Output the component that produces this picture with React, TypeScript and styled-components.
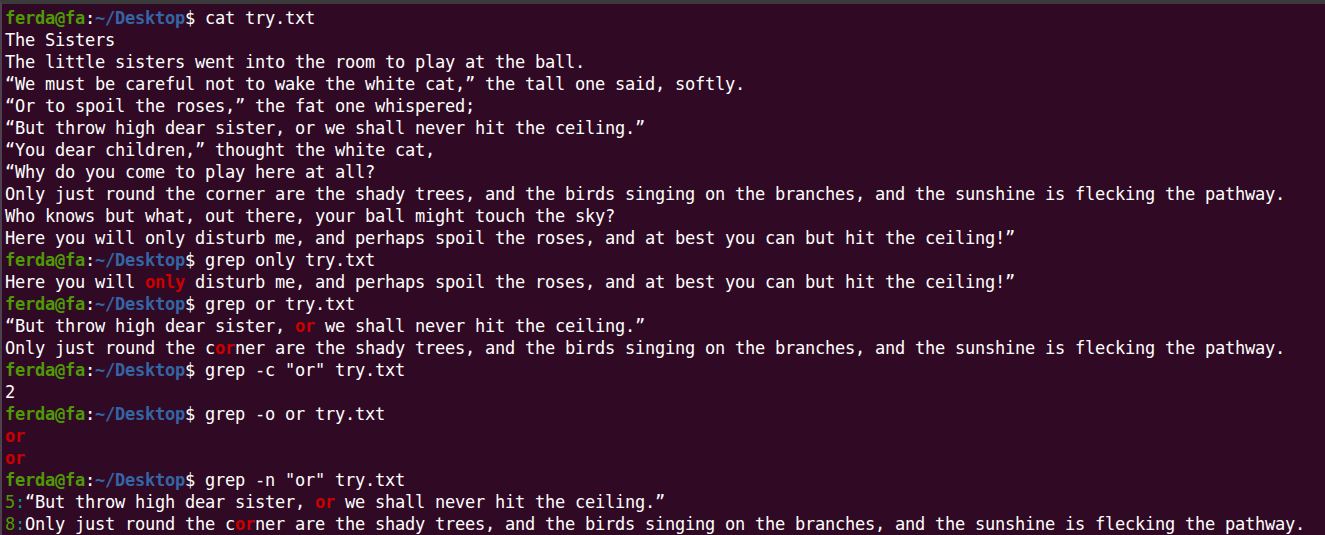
import React from "react";
import styled, { createGlobalStyle } from "styled-components";

const GlobalStyle = createGlobalStyle`
  html, body {
    margin: 0;
    padding: 0;
    background: #300a24;
  }
  #root {
    height: 535px;
    overflow: hidden;
  }
`;

type Tone = "text" | "user" | "path" | "match" | "lineNo" | "sep";

const toneColor: Record<Tone, string> = {
  text: "#ffffff",
  user: "#4e9a06",
  path: "#3465a4",
  match: "#cc0000",
  lineNo: "#4e9a06",
  sep: "#06989a",
};

const toneBold: Record<Tone, boolean> = {
  text: false,
  user: true,
  path: true,
  match: true,
  lineNo: false,
  sep: false,
};

const Terminal = styled.div`
  box-sizing: border-box;
  height: 535px;
  background: #300a24;
  border-top: 4px solid #3a3a3a;
  border-left: 2px solid #4d4150;
  padding: 3px 0 0 3px;
  display: flex;
  flex-direction: column;
  overflow: hidden;
`;

const Line = styled.div`
  height: 22px;
  line-height: 22px;
  white-space: pre;
  font-family: "DejaVu Sans Mono", "Liberation Mono", monospace;
  font-size: 17px;
  letter-spacing: -0.235px;
  color: #ffffff;
`;

const Seg = styled.span<{ $tone: Tone }>`
  color: ${(p) => toneColor[p.$tone]};
  font-weight: ${(p) => (toneBold[p.$tone] ? 700 : 400)};
`;

type Part = [Tone, string];
type Row = { kind: "prompt"; cmd: string } | { kind: "out"; parts: Part[] };

const t = (s: string): Part => ["text", s];
const m = (s: string): Part => ["match", s];

const rows: Row[] = [
  { kind: "prompt", cmd: "cat try.txt" },
  { kind: "out", parts: [t("The Sisters")] },
  { kind: "out", parts: [t("The little sisters went into the room to play at the ball.")] },
  { kind: "out", parts: [t("\u201cWe must be careful not to wake the white cat,\u201d the tall one said, softly.")] },
  { kind: "out", parts: [t("\u201cOr to spoil the roses,\u201d the fat one whispered;")] },
  { kind: "out", parts: [t("\u201cBut throw high dear sister, or we shall never hit the ceiling.\u201d")] },
  { kind: "out", parts: [t("\u201cYou dear children,\u201d thought the white cat,")] },
  { kind: "out", parts: [t("\u201cWhy do you come to play here at all?")] },
  {
    kind: "out",
    parts: [t("Only just round the corner are the shady trees, and the birds singing on the branches, and the sunshine is flecking the pathway.")],
  },
  { kind: "out", parts: [t("Who knows but what, out there, your ball might touch the sky?")] },
  {
    kind: "out",
    parts: [t("Here you will only disturb me, and perhaps spoil the roses, and at best you can but hit the ceiling!\u201d")],
  },
  { kind: "prompt", cmd: "grep only try.txt" },
  {
    kind: "out",
    parts: [t("Here you will "), m("only"), t(" disturb me, and perhaps spoil the roses, and at best you can but hit the ceiling!\u201d")],
  },
  { kind: "prompt", cmd: "grep or try.txt" },
  { kind: "out", parts: [t("\u201cBut throw high dear sister, "), m("or"), t(" we shall never hit the ceiling.\u201d")] },
  {
    kind: "out",
    parts: [t("Only just round the c"), m("or"), t("ner are the shady trees, and the birds singing on the branches, and the sunshine is flecking the pathway.")],
  },
  { kind: "prompt", cmd: 'grep -c "or" try.txt' },
  { kind: "out", parts: [t("2")] },
  { kind: "prompt", cmd: "grep -o or try.txt" },
  { kind: "out", parts: [m("or")] },
  { kind: "out", parts: [m("or")] },
  { kind: "prompt", cmd: 'grep -n "or" try.txt' },
  {
    kind: "out",
    parts: [["lineNo", "5"], ["sep", ":"], t("\u201cBut throw high dear sister, "), m("or"), t(" we shall never hit the ceiling.\u201d")],
  },
  {
    kind: "out",
    parts: [
      ["lineNo", "8"],
      ["sep", ":"],
      t("Only just round the c"),
      m("or"),
      t("ner are the shady trees, and the birds singing on the branches, and the sunshine is flecking the pathway."),
    ],
  },
];

const Prompt: React.FC<{ cmd: string }> = ({ cmd }) => (
  <Line>
    <Seg $tone="user">ferda@fa</Seg>
    <Seg $tone="text">:</Seg>
    <Seg $tone="path">~/Desktop</Seg>
    <Seg $tone="text">{"$ " + cmd}</Seg>
  </Line>
);

export default function App() {
  return (
    <>
      <GlobalStyle />
      <Terminal>
        {rows.map((row, i) =>
          row.kind === "prompt" ? (
            <Prompt key={i} cmd={row.cmd} />
          ) : (
            <Line key={i}>
              {row.parts.map(([tone, s], j) => (
                <Seg key={j} $tone={tone}>
                  {s}
                </Seg>
              ))}
            </Line>
          )
        )}
      </Terminal>
    </>
  );
}
